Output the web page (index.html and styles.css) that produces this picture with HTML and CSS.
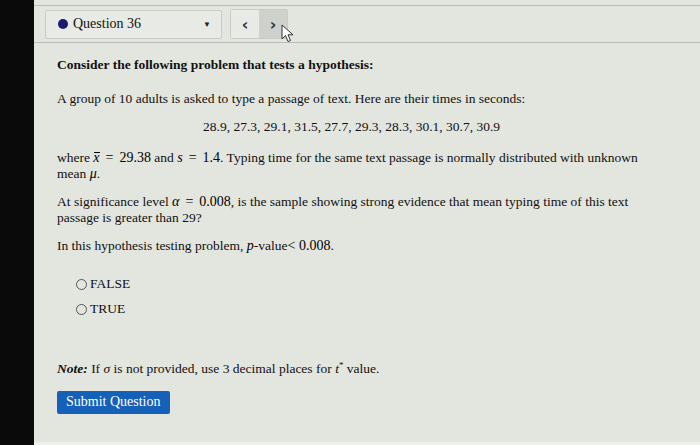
FILE: index.html
```html
<!DOCTYPE html>
<html lang="en">
<head>
    <meta charset="UTF-8">
    <title>Question 36</title>
    <link rel="stylesheet" href="styles.css">
</head>
<body>
    <div class="bezel"></div>
    <div class="page">
        <!-- question picker and prev/next -->
        <div class="topbar">
            <div class="picker">
                <span class="dot"></span>
                <span class="picker-label">Question 36</span>
                <span class="caret">&#9660;</span>
            </div>
            <div class="nav">
                <button class="nav-btn">&lsaquo;</button>
                <button class="nav-btn active">&rsaquo;</button>
                <svg class="cursor" width="14" height="20" viewBox="0 0 14 20">
                    <path d="M1 1 L1 15 L4.5 11.5 L7 17.5 L9.5 16.5 L7 10.8 L12 10.8 Z" fill="#fff" stroke="#333" stroke-width="1"/>
                </svg>
            </div>
        </div>

        <div class="question">
            <p class="title">Consider the following problem that tests a hypothesis:</p>
            <p>A group of 10 adults is asked to type a passage of text. Here are their times in seconds:</p>
            <p class="data">28.9, 27.3, 29.1, 31.5, 27.7, 29.3, 28.3, 30.1, 30.7, 30.9</p>
            <p>where <span class="m"><i class="xbar">x</i><span class="eq">=</span>29.38</span> and <span class="m"><i>s</i><span class="eq">=</span>1.4</span>. Typing time for the same text passage is normally distributed with unknown mean <span class="m"><i>&mu;</i></span>.</p>
            <p>At significance level <span class="m"><i>&alpha;</i><span class="eq">=</span>0.008</span>, is the sample showing strong evidence that mean typing time of this text passage is greater than 29?</p>
            <p>In this hypothesis testing problem, <span class="m"><i>p</i></span>-value<span class="m">&lt; 0.008</span>.</p>

            <div class="choices">
                <label class="choice"><span class="radio"></span>FALSE</label>
                <label class="choice"><span class="radio"></span>TRUE</label>
            </div>

            <p class="note"><b><i>Note:</i></b> If <i>&sigma;</i> is not provided, use 3 decimal places for <i>t</i><sup>*</sup> value.</p>

            <button class="submit">Submit Question</button>
        </div>
    </div>
</body>
</html>
```

FILE: styles.css
```css
html, body {
    margin: 0;
    padding: 0;
    height: 100%;
}

body {
    display: flex;
    background-color: #e3e5df;
    font-family: "Liberation Serif", "Times New Roman", serif;
    color: #111;
    overflow: hidden;
}

/* dark monitor edge on the left */
.bezel {
    width: 34px;
    flex-shrink: 0;
    background-color: #0b0a0a;
}

.page {
    flex: 1;
    padding-top: 5px;
    border-bottom: 3px solid #eef0ec;
}

.topbar {
    display: flex;
    align-items: center;
    gap: 8px;
    height: 36px;
    padding-left: 11px;
    border-top: 1px solid #b9bbb6;
    border-bottom: 1px solid #b9bbb6;
}

.picker {
    display: flex;
    align-items: center;
    width: 177px;
    height: 29px;
    padding: 0 10px 0 12px;
    box-sizing: border-box;
    border: 1px solid #c9cbc6;
    border-radius: 2px;
    background-color: #e8eae5;
}

.dot {
    width: 10px;
    height: 10px;
    border-radius: 50%;
    background-color: #1c1a6e;
    margin-right: 5px;
}

.picker-label {
    font-size: 14px;
    flex: 1;
}

.caret {
    font-size: 8px;
    color: #222;
}

.nav {
    display: flex;
    position: relative;
    height: 28px;
    border: 1px solid #c9cbc6;
    border-radius: 2px;
}

.nav-btn {
    width: 28px;
    border: none;
    padding: 0;
    background-color: #e8eae5;
    font-family: "DejaVu Sans", sans-serif;
    font-size: 16px;
    font-weight: bold;
    color: #333;
}

.nav-btn.active {
    background-color: #cfd1cc;
}

.cursor {
    position: absolute;
    left: 50px;
    top: 14px;
}

.question {
    padding: 14px 0 0 23px;
    font-size: 13.5px;
    line-height: 16px;
}

.question p {
    margin: 0 0 12px 0;
    max-width: 585px;
}

.question .title {
    font-weight: bold;
    margin-bottom: 18px;
}

.question .data {
    text-align: center;
    max-width: 589px;
    margin-bottom: 15px;
}

.m {
    font-size: 14px;
    color: #000;
}

.eq {
    margin: 0 6px;
}

.xbar {
    position: relative;
}

.xbar::after {
    content: "";
    position: absolute;
    left: 1px;
    right: 0;
    top: 2px;
    border-top: 1px solid #000;
}

.choices {
    display: flex;
    flex-direction: column;
    gap: 9px;
    padding: 10px 0 0 19px;
    margin-bottom: 44px;
}

.choice {
    display: flex;
    align-items: center;
    font-size: 13.5px;
}

.radio {
    width: 9px;
    height: 9px;
    border: 1px solid #555;
    border-radius: 50%;
    margin-right: 3px;
}

.note sup {
    font-size: 9px;
    line-height: 0;
}

.submit {
    margin-top: 2px;
    padding: 3px 9px 4px 9px;
    border: none;
    border-radius: 2px;
    background-color: #1560b8;
    color: #fff;
    font-family: "Liberation Serif", serif;
    font-size: 14px;
}
```
